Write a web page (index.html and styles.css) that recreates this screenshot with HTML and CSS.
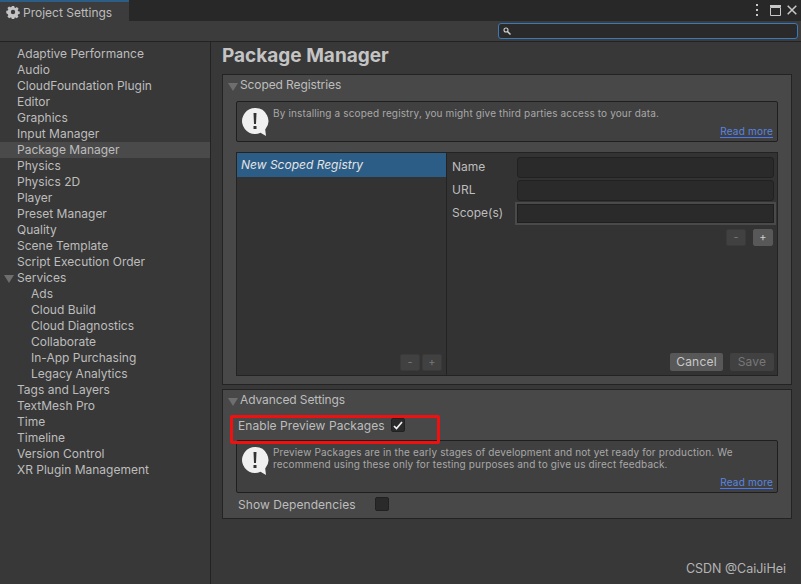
FILE: index.html
```html
<!DOCTYPE html>
<html lang="en">
<head>
<meta charset="utf-8">
<title>Project Settings</title>
<link rel="stylesheet" href="styles.css">
</head>
<body>
<div class="window">
  <header class="tabbar">
    <div class="tab">
      <svg class="gear" width="14" height="14" viewBox="0 0 14 14"><path fill="#c4c4c4" fill-rule="evenodd" d="M5.8 1h2.4l.3 1.600 1 .4 1.400-.9 1.700 1.700-.9 1.400.4 1 1.600.3v2.400l-1.600.3-.4 1-.1.1.9 1.300-1.600 1.700-1.400-.9-1 .4-.3 1.600H5.800l-.3-1.600-1-.4-1.400.9-1.700-1.700.9-1.400-.4-1L.3 8.200V5.800l1.600-.3.4-1-.9-1.400 1.700-1.700 1.400.9 1-.4zM7 4.800a2.200 2.200 0 1 0 0 4.400 2.200 2.200 0 0 0 0-4.400z"/></svg>
      <span>Project Settings</span>
    </div>
    <div class="win-icons">
      <svg class="dots" width="4" height="12" viewBox="0 0 4 12"><path fill="#c8c8c8" d="M1 0h2v2H1zM1 5h2v2H1zM1 10h2v2H1z"/></svg>
      <svg width="11" height="11" viewBox="0 0 11 11"><path fill="none" stroke="#c8c8c8" d="M.5 2.500h10v8H.5z"/><path fill="#c8c8c8" d="M0 0h11v2H0z"/></svg>
      <svg width="10" height="10" viewBox="0 0 10 10"><path stroke="#c8c8c8" stroke-width="1.500" d="M.7.700l8.600 8.600M9.300.700L.7 9.300"/></svg>
    </div>
  </header>
  <div class="toolbar">
    <div class="search">
      <svg width="8" height="8" viewBox="0 0 8 8"><circle cx="3" cy="3" r="2" fill="none" stroke="#d0d0d0" stroke-width="1.100"/><path stroke="#d0d0d0" stroke-width="1.500" d="M4.500 4.500L7.500 7.500"/></svg>
    </div>
  </div>
  <div class="body">
    <nav class="sidebar">
      <div class="row">Adaptive Performance</div>
      <div class="row">Audio</div>
      <div class="row">CloudFoundation Plugin</div>
      <div class="row">Editor</div>
      <div class="row">Graphics</div>
      <div class="row">Input Manager</div>
      <div class="row selected">Package Manager</div>
      <div class="row">Physics</div>
      <div class="row">Physics 2D</div>
      <div class="row">Player</div>
      <div class="row">Preset Manager</div>
      <div class="row">Quality</div>
      <div class="row">Scene Template</div>
      <div class="row">Script Execution Order</div>
      <div class="row parent"><i class="arrow side-arrow"></i>Services</div>
      <div class="row child">Ads</div>
      <div class="row child">Cloud Build</div>
      <div class="row child">Cloud Diagnostics</div>
      <div class="row child">Collaborate</div>
      <div class="row child">In-App Purchasing</div>
      <div class="row child">Legacy Analytics</div>
      <div class="row">Tags and Layers</div>
      <div class="row">TextMesh Pro</div>
      <div class="row">Time</div>
      <div class="row">Timeline</div>
      <div class="row">Version Control</div>
      <div class="row">XR Plugin Management</div>
    </nav>
    <main class="content">
      <h1 class="page-title">Package Manager</h1>
      <section class="panel panel-scoped">
        <h2 class="panel-title"><i class="arrow"></i>Scoped Registries</h2>
        <div class="help help-scoped">
          <svg class="warn" width="29" height="30" viewBox="0 0 29 30"><path fill="#f0f0f0" d="M14 1a13 13 0 1 0 5.500 24.800l5.500 3.200-.8-6.500A13 13 0 0 0 14 1z"/><path fill="#333" d="M12.500 6h3l-.5 11h-2zM12.500 19h3v3h-3z"/></svg>
          <p class="help-text">By installing a scoped registry, you might give third parties access to your data.</p>
          <a class="more">Read more</a>
        </div>
        <div class="registry">
          <div class="reg-list">
            <div class="reg-item">New Scoped Registry</div>
            <div class="small-btns reg-list-btns">
              <span class="small-btn">-</span><span class="small-btn">+</span>
            </div>
          </div>
          <div class="reg-form">
            <div class="field"><label>Name</label><div class="input"></div></div>
            <div class="field"><label>URL</label><div class="input"></div></div>
            <div class="field"><label>Scope(s)</label><div class="input input-focus"></div></div>
            <div class="small-btns form-btns">
              <span class="small-btn">-</span><span class="small-btn on">+</span>
            </div>
            <div class="actions">
              <span class="btn">Cancel</span><span class="btn off">Save</span>
            </div>
          </div>
        </div>
      </section>
      <section class="panel panel-adv">
        <h2 class="panel-title"><i class="arrow"></i>Advanced Settings</h2>
        <div class="check-row preview-row"><span class="check-label">Enable Preview Packages</span>
          <span class="check"><svg width="10" height="9" viewBox="0 0 10 9"><path fill="none" stroke="#f2f2f2" stroke-width="1.700" d="M1 5l2.500 2.500L9 1"/></svg></span>
        </div>
        <div class="help help-adv">
          <svg class="warn" width="29" height="30" viewBox="0 0 29 30"><path fill="#f0f0f0" d="M14 1a13 13 0 1 0 5.500 24.800l5.500 3.200-.8-6.500A13 13 0 0 0 14 1z"/><path fill="#333" d="M12.500 6h3l-.5 11h-2zM12.500 19h3v3h-3z"/></svg>
          <p class="help-text">Preview Packages are in the early stages of development and not yet ready for production. We recommend using these only for testing purposes and to give us direct feedback.</p>
          <a class="more">Read more</a>
        </div>
        <div class="check-row dep-row"><span class="check-label">Show Dependencies</span><span class="check"></span></div>
      </section>
      <div class="red-mark"></div>
      <div class="watermark">CSDN @CaiJiHei</div>
    </main>
  </div>
</div>
</body>
</html>
```

FILE: styles.css
```css
* { box-sizing: border-box; }
html, body { margin: 0; height: 100%; }
body {
  background: #383838;
  color: #bdbdbd;
  font-family: Inter, "Liberation Sans", sans-serif;
  font-size: 12px;
  overflow: hidden;
}
.window { width: 801px; height: 584px; display: flex; flex-direction: column; }

.tabbar {
  height: 21px;
  flex: none;
  background: #282828;
  display: flex;
  justify-content: space-between;
}
.tab {
  width: 129px;
  height: 21px;
  background: #3c3c3c;
  border-top: 2px solid #2c5d87;
  display: flex;
  align-items: center;
  gap: 3px;
  padding: 1px 0 0 6px;
  font-size: 12px;
  color: #bdbdbd;
}
.win-icons { display: flex; align-items: center; gap: 6px; padding: 0 4px 1px 0; }
.dots { margin-right: 5px; }

.toolbar {
  height: 21px;
  flex: none;
  background: #3c3c3c;
  border-bottom: 1px solid #232323;
  display: flex;
  justify-content: flex-end;
  padding: 2px 3px 0 0;
}
.search {
  width: 300px;
  height: 16px;
  background: #2a2a2a;
  border: 1px solid #3a79bb;
  border-radius: 3px;
  display: flex;
  align-items: center;
  padding-left: 4px;
}

.body { flex: 1; display: flex; min-height: 0; position: relative; }
.sidebar {
  width: 211px;
  flex: none;
  border-right: 1px solid #232323;
  padding-top: 4px;
}
.row { height: 16px; line-height: 16px; padding-left: 17px; white-space: nowrap; position: relative; }
.row.selected { background: #4a4a4a; }
.row.child { padding-left: 31px; }
.arrow {
  display: inline-block;
  width: 0; height: 0;
  border-left: 5px solid transparent;
  border-right: 5px solid transparent;
  border-top: 8px solid #6e6e6e;
}
.side-arrow { position: absolute; left: 4px; top: 5px; }

.content { flex: 1; padding: 0 9px 0 11px; min-width: 0; }
.page-title {
  margin: 3px 0 7px;
  height: 22px;
  line-height: 22px;
  font-size: 19px;
  font-weight: 700;
  color: #c4c4c4;
}
.panel {
  background: #484848;
  border: 1px solid #232323;
  padding: 0 13px;
}
.panel-scoped { height: 311px; margin-bottom: 4px; }
.panel-adv { height: 130px; }
.panel-title {
  margin: 0 0 0 -8px;
  height: 26px;
  padding-bottom: 8px;
  display: flex;
  align-items: center;
  gap: 2px;
  font-size: 12px;
  font-weight: 400;
  letter-spacing: -.1px;
  color: #bdbdbd;
}
.panel-title .arrow { position: relative; top: 3px; }

.help {
  background: #404040;
  border: 1px solid #1f1f1f;
  border-radius: 2px;
  position: relative;
  padding: 5px 8px 0 36px;
}
.help-scoped { height: 41px; margin-bottom: 10px; }
.help-adv { height: 53px; margin-bottom: 2px; }
.warn { position: absolute; left: 4px; top: 5px; }
.help-text {
  margin: 0;
  font-size: 10px;
  line-height: 12px;
  letter-spacing: .14px;
  color: #a8a8a8;
}
.more {
  position: absolute;
  right: 4px;
  bottom: 3px;
  font-size: 10px;
  line-height: 12px;
  letter-spacing: .2px;
  color: #5a86e0;
  border-bottom: 1px solid #4a78f0;
}

.registry {
  height: 224px;
  display: flex;
  background: #333333;
  border: 1px solid #232323;
}
.reg-list {
  width: 210px;
  flex: none;
  border-right: 1px solid #232323;
  display: flex;
  flex-direction: column;
  justify-content: space-between;
}
.reg-item {
  height: 24px;
  line-height: 24px;
  background: #2c5d87;
  color: #e4e4e4;
  font-style: italic;
  padding-left: 4px;
}
.small-btns { display: flex; gap: 2px; }
.reg-list-btns { padding: 0 0 4px 163px; }
.small-btn {
  width: 20px;
  height: 17px;
  border-radius: 2px;
  background: #414141;
  border: 1px solid #3a3a3a;
  color: #777;
  font-size: 11px;
  line-height: 14px;
  text-align: center;
}
.small-btn.on { background: #585858; border-color: #585858; color: #d0d0d0; }

.reg-form { flex: 1; position: relative; padding: 4px 3px 0 5px; min-width: 0; }
.field { display: flex; align-items: center; height: 21px; margin-bottom: 2px; }
.field label { width: 65px; flex: none; position: relative; top: -1px; }
.input {
  flex: 1;
  height: 21px;
  background: #2a2a2a;
  border: 1px solid #212121;
  border-radius: 3px;
}
.input-focus {
  flex: none;
  width: 261px;
  height: 23px;
  margin-left: -2px;
  border: 2px solid #4a4a4a;
  border-radius: 0;
  box-shadow: inset 0 0 0 1px #202020;
}
.form-btns { justify-content: flex-end; gap: 7px; margin-top: 5px; padding-right: 1px; }
.actions {
  position: absolute;
  right: 3px;
  bottom: 4px;
  display: flex;
  gap: 7px;
}
.btn {
  height: 18px;
  line-height: 17px;
  text-align: center;
  border-radius: 2px;
  background: #585858;
  color: #c8c8c8;
  width: 53px;
  letter-spacing: .2px;
}
.btn.off { width: 44px; background: #414141; color: #777; }

.check-row { display: flex; align-items: center; height: 20px; margin-left: 2px; letter-spacing: .06px; }
.check-label { width: 153px; flex: none; }
.check {
  width: 14px;
  height: 14px;
  background: #2a2a2a;
  border: 1px solid #212121;
  border-radius: 2px;
  display: flex;
  align-items: center;
  justify-content: center;
}
.preview-row { margin-top: -1px; margin-bottom: 5px; }
.dep-row { position: relative; top: -1px; }
.dep-row .check-label { width: 137px; }

.red-mark {
  position: absolute;
  left: 230px;
  top: 373px;
  width: 210px;
  height: 29px;
  border: 3px solid #f01010;
  border-radius: 2px;
}
.watermark {
  position: absolute;
  right: 15px;
  bottom: 7px;
  font-size: 12.500px;
  line-height: 16px;
  color: #b4b4b4;
}
```
